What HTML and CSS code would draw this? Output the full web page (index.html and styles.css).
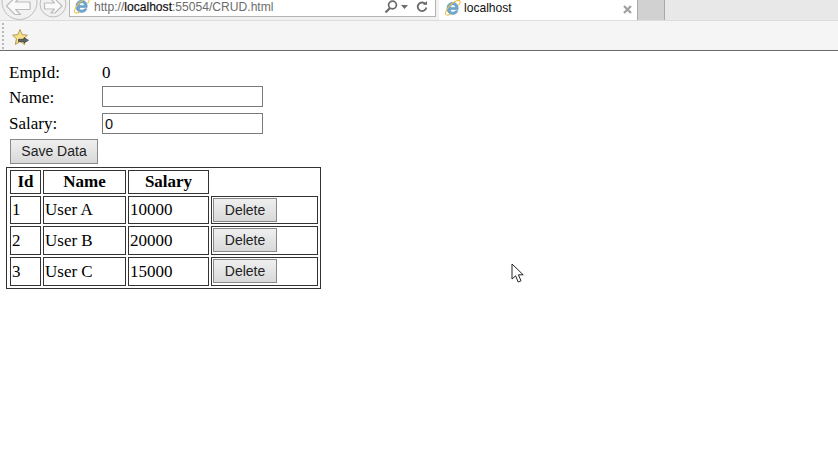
FILE: index.html
```html
<!DOCTYPE html>
<html lang="en">
<head>
<meta charset="utf-8">
<title>localhost</title>
<link rel="stylesheet" href="styles.css">
</head>
<body>
<header class="chrome">
  <div class="tabrow">
    <div class="navs">
      <svg class="nav-back" width="37" height="20" viewBox="0 0 37 20"><circle cx="18.5" cy="2" r="17.5" fill="#f1f1f1" stroke="#bdbdbd"/><path d="M5.5 6 L14 -2.5 H19 L14.5 2 H29 V9.5 H14.5 L19.5 14.5 H14 Z" fill="#fafafa" stroke="#bcbcbc" stroke-width="1.2" stroke-linejoin="round"/></svg>
      <svg class="nav-fwd" width="28" height="20" viewBox="0 0 28 20"><circle cx="14" cy="4" r="13" fill="#f1f1f1" stroke="#bdbdbd"/><path d="M23 6 L16 -1 H12 L15.5 3 H5.5 V9 H15.5 L12 13 H16 Z" fill="#fafafa" stroke="#bcbcbc" stroke-width="1.2" stroke-linejoin="round"/></svg>
    </div>
    <div class="address">
      <svg class="ie ie-addr" width="17" height="17" viewBox="0 0 17 17"><use href="#ie-mark"/></svg>
      <span class="url">http://<span class="host">localhost</span>:55054/CRUD.html</span>
      <span class="addr-tools">
        <svg width="14" height="14" viewBox="0 0 14 14"><circle cx="8.5" cy="5" r="3.9" fill="none" stroke="#6a6a6a" stroke-width="1.7"/><path d="M6 8 L1.5 12.5" stroke="#6a6a6a" stroke-width="2.2"/></svg>
        <svg width="7" height="4" viewBox="0 0 7 4"><path d="M0 0H7L3.5 4Z" fill="#6e6e6e"/></svg>
        <svg class="refresh" width="12" height="12" viewBox="0 0 12 12"><path d="M9.5 3.2A4.3 4.3 0 1 0 10.3 6.5" fill="none" stroke="#6a6a6a" stroke-width="1.8"/><path d="M7 3.8H11V0Z" fill="#6a6a6a"/></svg>
      </span>
    </div>
    <div class="tab">
      <svg class="ie" width="17" height="17" viewBox="0 0 17 17"><use href="#ie-mark"/></svg>
      <span class="tab-title">localhost</span>
      <svg class="tab-close" width="9" height="9" viewBox="0 0 9 9"><path d="M1 1L8 8M8 1L1 8" stroke="#a0a0a0" stroke-width="2.2"/></svg>
    </div>
    <div class="newtab"></div>
    <div class="rest"></div>
  </div>
  <div class="favbar">
    <span class="grip"></span>
    <svg class="fav-star" width="18" height="19" viewBox="0 0 18 19"><path d="M8 1.5 L10.2 6.6 L15.4 7.2 L11.5 10.8 L12.7 16.5 L8 13.6 L3.3 16.5 L4.5 10.8 L.6 7.2 L5.8 6.6 Z" fill="#f8e088" stroke="#b59a58"/><path d="M6.5 11.3H12V9.6L16.4 12.3L12 15V13.5H6.5Z" fill="#5f6468" stroke="#33383b" stroke-width=".7"/></svg>
  </div>
</header>
<main class="page">
  <form class="emp-form">
    <div class="row row-id"><label class="lbl">EmpId:</label><span>0</span></div>
    <div class="row"><label class="lbl lbl-name">Name:</label><input class="field" type="text"></div>
    <div class="row"><label class="lbl">Salary:</label><input class="field" type="text" value="0"></div>
    <button class="btn save" type="button">Save Data</button>
  </form>
  <table class="grid">
    <tr><th class="c-id">Id</th><th class="c-name">Name</th><th class="c-sal">Salary</th></tr>
    <tr class="first"><td>1</td><td>User A</td><td>10000</td><td class="act"><button class="btn del" type="button">Delete</button></td></tr>
    <tr><td>2</td><td>User B</td><td>20000</td><td class="act"><button class="btn del" type="button">Delete</button></td></tr>
    <tr><td>3</td><td>User C</td><td>15000</td><td class="act"><button class="btn del" type="button">Delete</button></td></tr>
  </table>
</main>
<svg class="cursor" width="14" height="21" viewBox="0 0 14 21"><path d="M1 1V16L4.6 12.8L7.2 19L10 17.8L7.4 11.8H12.2Z" fill="#fff" stroke="#222" stroke-width="1"/></svg>
<svg class="defs" width="0" height="0"><defs><g id="ie-mark"><path d="M3 9.5C3 5.5 5.5 3.3 8.7 3.3C12 3.3 14.2 5.7 14.2 9.4V10.4H6.2C6.4 12.4 7.6 13.2 9 13.2C10.2 13.2 11 12.7 11.5 11.8H14C13.2 14.1 11.3 15.4 8.8 15.4C5.4 15.4 3 13.2 3 9.5ZM6.3 8.4H11.5C11.4 6.7 10.3 5.7 8.9 5.7C7.5 5.7 6.5 6.7 6.3 8.4Z" fill="#6fa6cf" stroke="#4a88b5" stroke-width=".5"/><path d="M1.7 15.2C.6 13.2 4.5 6 10.5 2.8C13.5 1.2 16 .8 16.2 2.5C16.3 3.6 15.5 5.2 14.6 6.4M1.7 15.2C2.6 16.5 5 16 7 14.8" fill="none" stroke="#eebf4c" stroke-width="1.1"/></g></defs></svg>
</body>
</html>
```
FILE: styles.css
```css
html, body { margin: 0; padding: 0; height: 469px; overflow: hidden; background: #fff; }
body { font-family: "Liberation Serif", serif; font-size: 17px; color: #000; position: relative; }
.chrome { height: 51px; display: flex; flex-direction: column; }
.tabrow { height: 21px; flex: none; display: flex; background: #f1f1f1; border-bottom: 1px solid #dcdcdc; box-sizing: border-box; overflow: hidden; }
.navs { width: 69px; display: flex; flex: none; }
.nav-back { margin-left: 1px; flex: none; }
.nav-fwd { margin-left: 1px; flex: none; }
.address { width: 367px; flex: none; box-sizing: border-box; height: 17px; background: #fff; border: 1px solid #b4b4b4; border-top: 0; display: flex; align-items: center; font: 12.1px "Liberation Sans", sans-serif; color: #6d6d6d; padding-left: 3px; }
.ie { flex: none; }
.ie-addr { margin-top: -5px; }
.url { margin-left: 4px; margin-top: -2px; }
.host { color: #111; -webkit-text-stroke: .2px #111; }
.addr-tools { margin-left: auto; display: flex; align-items: center; gap: 3px; padding-right: 7px; margin-top: -2px; }
.refresh { margin-left: 5px; }
.tab { width: 198px; flex: none; margin-left: 3px; background: #fff; box-sizing: border-box; display: flex; align-items: center; padding: 0 5px 5px 5px; font: 12.1px "Liberation Sans", sans-serif; color: #111; }
.tab-title { margin-left: 3px; }
.tab-close { margin-left: auto; margin-top: 3px; }
.newtab { width: 28px; flex: none; background: #d1d1d1; border: solid #a9a9a9; border-width: 0 1px; box-sizing: border-box; }
.rest { flex: 1; background: #e8e8e8; }
.favbar { flex: none; background: #f5f5f5; border-bottom: 1px solid #6a6a6a; display: flex; align-items: center; height: 29px; }
.grip { width: 2px; height: 26px; margin-left: 2px; margin-right: 8px; background: repeating-linear-gradient(#b9b9b9 0 2px, transparent 2px 4px); }
.fav-star { margin-top: 3px; }
.page { padding: 0 0 0 6px; }
.emp-form { padding: 11px 0 0 3px; }
.row { display: flex; align-items: center; height: 27px; }
.row-id { height: 21px; }
.lbl { width: 93px; flex: none; }
.lbl-name { margin-top: 2px; }
.field { width: 161px; height: 21px; box-sizing: border-box; border: 1px solid #7a7a7a; padding: 0 2px; margin: 0; font: 14.5px "Liberation Sans", sans-serif; background: #fff; color: #111; }
.btn { font: 14px "Liberation Sans", sans-serif; color: #222; border: 1px solid #8a8a8a; border-radius: 0; background: linear-gradient(#efefef, #d9d9d9); padding: 0; margin: 0; box-sizing: border-box; display: block; }
.save { width: 88px; height: 25px; margin-left: 1px; margin-top: 2px; padding-bottom: 2px; }
.grid { border: 1px solid #333; border-spacing: 2px; margin-top: 3px; padding-left: 1px; border-collapse: separate; }
.grid th, .grid td { border: 1px solid #333; padding: 1px; font-size: 17px; height: 29px; box-sizing: border-box; }
.grid .first td { height: 28px; }
.grid th { height: 24px; }
.c-id { width: 31px; }
.c-name { width: 83px; }
.c-sal { width: 81px; }
.grid td.act { width: 107px; vertical-align: top; }
.del { width: 64px; height: 24px; }
.cursor { position: absolute; left: 511px; top: 263px; }
.defs { position: absolute; }
```
